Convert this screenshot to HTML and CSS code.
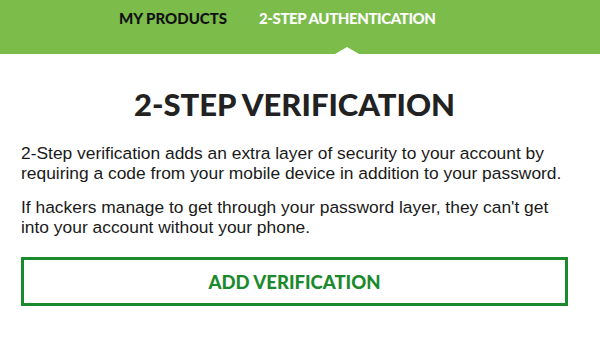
FILE: index.html
```html
<!DOCTYPE html>
<html>
<head>
    <title>2-Step Verification</title>
    <link rel="stylesheet" href="styles.css">
</head>
<body>
    <div class="topbar">
        <div class="nav">
            <a class="nav-item" href="#">MY PRODUCTS</a>
            <a class="nav-item active" href="#">2-STEP AUTHENTICATION</a>
        </div>
    </div>

    <div class="content">
        <h1>2-STEP VERIFICATION</h1>

        <p>2-Step verification adds an extra layer of security to your account by requiring a code from your mobile device in addition to your password.</p>

        <p>If hackers manage to get through your password layer, they can't get into your account without your phone.</p>

        <button class="add-btn">ADD VERIFICATION</button>
    </div>
</body>
</html>
```

FILE: styles.css
```css
body {
    margin: 0;
    font-family: "Liberation Sans", Arial, sans-serif;
    background: #fff;
    color: #222;
}

.topbar {
    background: #7bbc4b;
    height: 54px;
}

.nav {
    display: flex;
    gap: 32px;
    padding-left: 119px;
    height: 100%;
}

.nav-item {
    position: relative;
    font-family: Lato, sans-serif;
    font-weight: 900;
    font-size: 15px;
    line-height: 36px;
    color: #111;
    text-decoration: none;
}

.nav-item.active {
    color: #fff;
    letter-spacing: -0.4px;
}

/* little white notch under the active tab */
.nav-item.active::after {
    content: "";
    position: absolute;
    left: 50%;
    top: 47px;
    margin-left: -12px;
    border-left: 12px solid transparent;
    border-right: 12px solid transparent;
    border-bottom: 7px solid #fff;
}

.content {
    padding: 0 32px 0 21px;
}

h1 {
    font-family: Lato, sans-serif;
    font-weight: 900;
    font-size: 31px;
    line-height: 38px;
    text-align: center;
    color: #222;
    margin: 31px 0 20px;
}

p {
    font-size: 17.4px;
    line-height: 20px;
    margin: 0 0 14px;
    color: #1a1a1a;
}

.add-btn {
    display: block;
    width: 100%;
    height: 49px;
    margin-top: 20px;
    background: #fff;
    border: 3px solid #1b8a2d;
    color: #1b8a2d;
    font-family: Lato, sans-serif;
    font-weight: 900;
    font-size: 18.5px;
    cursor: pointer;
}
```
